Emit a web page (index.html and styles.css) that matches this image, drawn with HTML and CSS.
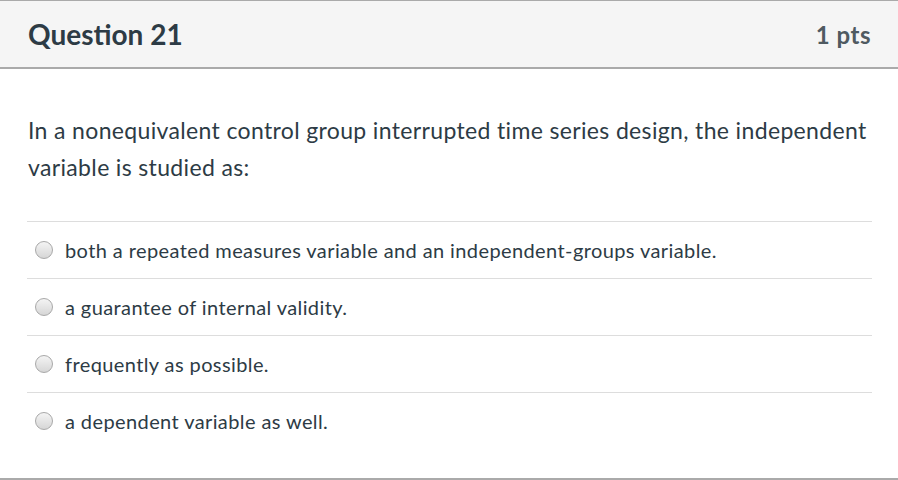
FILE: index.html
```html
<!DOCTYPE html>
<html>
<head>
<meta charset="utf-8">
<link rel="stylesheet" href="styles.css">
</head>
<body>
<div class="question">
  <div class="header">
    <div class="title">Question 21</div>
    <div class="pts">1 pts</div>
  </div>
  <div class="content">
    <div class="text">In a nonequivalent control group interrupted time series design, the independent variable is studied as:</div>
    <div class="answers">
      <div class="answer"><span class="radio"></span><span class="label">both a repeated measures variable and an independent-groups variable.</span></div>
      <div class="answer"><span class="radio"></span><span class="label">a guarantee of internal validity.</span></div>
      <div class="answer"><span class="radio"></span><span class="label">frequently as possible.</span></div>
      <div class="answer"><span class="radio"></span><span class="label">a dependent variable as well.</span></div>
    </div>
  </div>
</div>
</body>
</html>
```

FILE: styles.css
```css
html, body {
  margin: 0;
  padding: 0;
  background: #fff;
}
body {
  font-family: Lato, "Liberation Sans", sans-serif;
  color: #2d3b45;
}
.question {
  width: 898px;
  height: 480px;
  box-sizing: border-box;
  border-top: 1px solid #aaaaaa;
  border-bottom: 2px solid #aaaaaa;
  display: flex;
  flex-direction: column;
}
.header {
  height: 66px;
  background: #f5f5f5;
  border-bottom: 2px solid #aaaaaa;
  display: flex;
  align-items: center;
  justify-content: space-between;
  padding: 0 27px 0 28px;
  flex: none;
}
.title {
  font-size: 28px;
  font-weight: 700;
  color: #2d3b45;
}
.pts {
  font-size: 24px;
  font-weight: 700;
  letter-spacing: 0.5px;
  color: #4f5a61;
}
.content {
  padding: 43px 24px 0 27px;
}
.text {
  font-size: 23px;
  letter-spacing: 0.35px;
  line-height: 37px;
  padding-left: 1px;
  margin-bottom: 35px;
}
.answers {
  margin-right: 2px;
}
.answer {
  height: 56px;
  border-top: 1px solid #dddddd;
  display: flex;
  align-items: center;
  gap: 12px;
  padding-left: 8px;
}
.radio {
  width: 16px;
  height: 16px;
  border-radius: 50%;
  border: 1px solid #a8a8a8;
  background: linear-gradient(#f4f4f4, #d6d6d6);
  flex: none;
}
.label {
  font-size: 20px;
  letter-spacing: 0.4px;
}
```
